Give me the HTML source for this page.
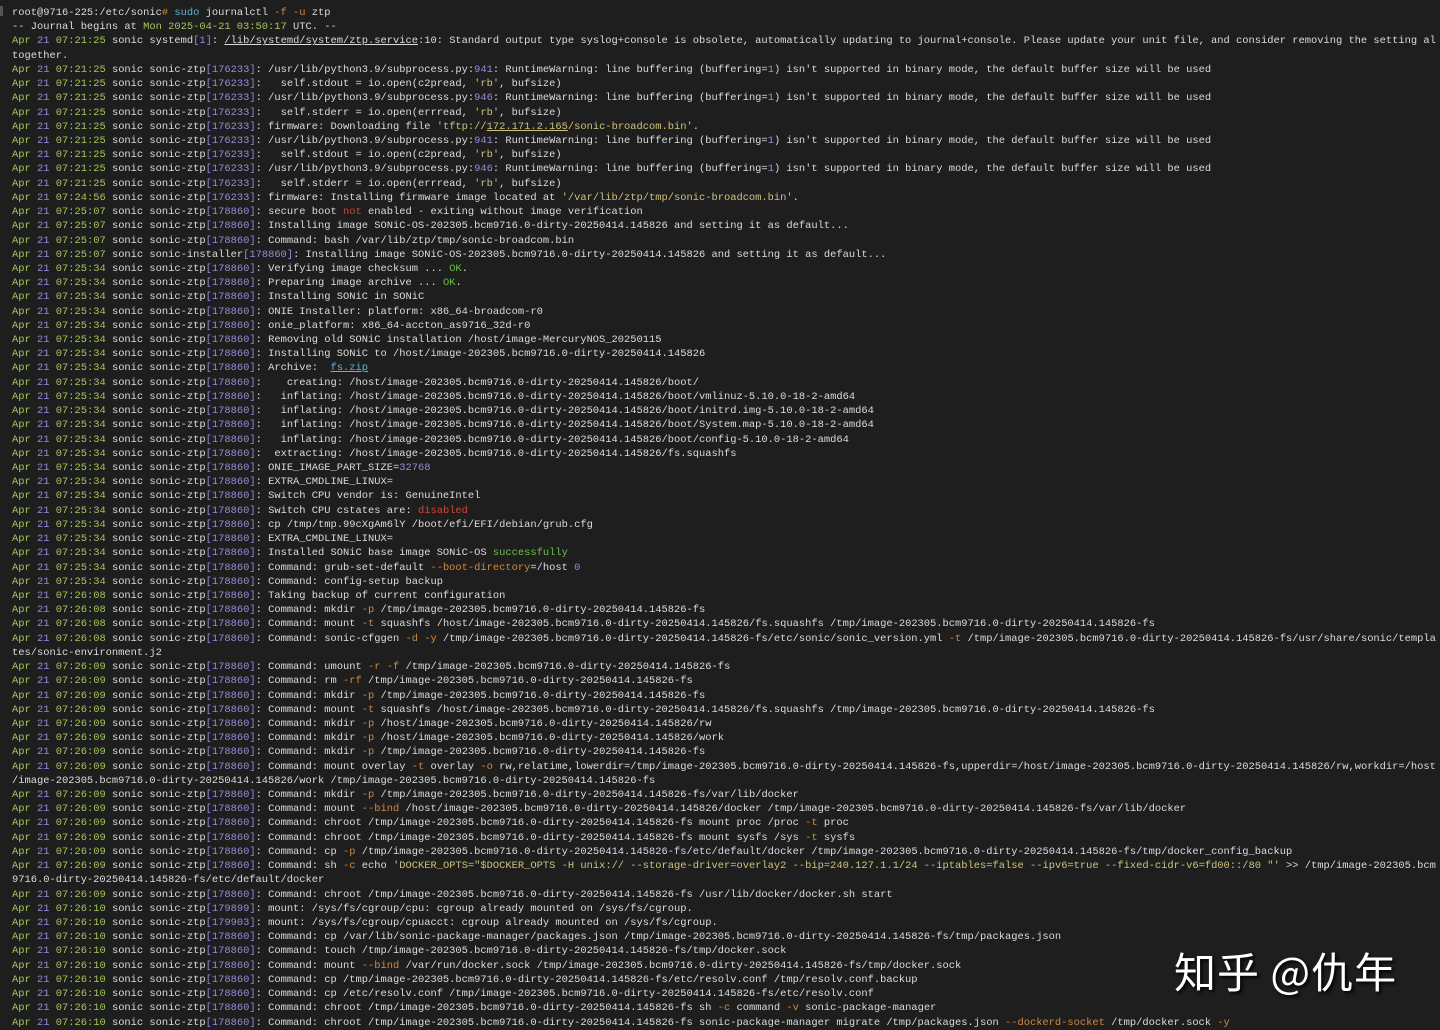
<!DOCTYPE html>
<html><head><meta charset="utf-8"><style>
html,body{margin:0;padding:0;background:#1e1e1e;width:1440px;height:1030px;overflow:hidden}
pre{margin:0;position:absolute;left:12px;top:6px;font-family:"Liberation Mono","DejaVu Sans Mono",monospace;font-size:10.42px;line-height:14.22px;color:#dcdcdc;white-space:pre}
.d{color:#a3c75b}.n{color:#9b88d8}.p{color:#9b88d8}.y{color:#cfc27e}.o{color:#d08a3e}.r{color:#d0453c}.g{color:#6cc04a}.c{color:#5fb3d6}.u{text-decoration:underline}
.wm{position:absolute;left:1174px;top:940px;font-family:"Noto Sans CJK SC","WenQuanYi Zen Hei",sans-serif;font-size:42px;color:#fff;text-shadow:2px 2px 3px #000;letter-spacing:1px}
.bar{position:absolute;left:0;top:6px;width:3px;height:10px;background:#555}
</style></head><body><div class="bar"></div><pre>root@9716-225:/etc/sonic<span class="o">#</span> <span class="c">sudo</span> journalctl <span class="o">-f -u</span> ztp
-- Journal begins at <span class="d">Mon 2025-04-21 03:50:17</span> UTC. --
<span class="d">Apr</span> <span class="n">21</span> <span class="d">07:21:25</span> sonic systemd<span class="p">[1]</span>: <span class="u">/lib/systemd/system/ztp.service</span>:10: Standard output type syslog+console is obsolete, automatically updating to journal+console. Please update your unit file, and consider removing the setting al
together.
<span class="d">Apr</span> <span class="n">21</span> <span class="d">07:21:25</span> sonic sonic-ztp<span class="p">[176233]</span>: /usr/lib/python3.9/subprocess.py:<span class="p">941</span>: RuntimeWarning: line buffering (buffering=<span class="p">1</span>) isn't supported in binary mode, the default buffer size will be used
<span class="d">Apr</span> <span class="n">21</span> <span class="d">07:21:25</span> sonic sonic-ztp<span class="p">[176233]</span>:   self.stdout = io.open(c2pread, <span class="y">'rb'</span>, bufsize)
<span class="d">Apr</span> <span class="n">21</span> <span class="d">07:21:25</span> sonic sonic-ztp<span class="p">[176233]</span>: /usr/lib/python3.9/subprocess.py:<span class="p">946</span>: RuntimeWarning: line buffering (buffering=<span class="p">1</span>) isn't supported in binary mode, the default buffer size will be used
<span class="d">Apr</span> <span class="n">21</span> <span class="d">07:21:25</span> sonic sonic-ztp<span class="p">[176233]</span>:   self.stderr = io.open(errread, <span class="y">'rb'</span>, bufsize)
<span class="d">Apr</span> <span class="n">21</span> <span class="d">07:21:25</span> sonic sonic-ztp<span class="p">[176233]</span>: firmware: Downloading file <span class="y">'tftp://<span class="u">172.171.2.165</span>/sonic-broadcom.bin'</span>.
<span class="d">Apr</span> <span class="n">21</span> <span class="d">07:21:25</span> sonic sonic-ztp<span class="p">[176233]</span>: /usr/lib/python3.9/subprocess.py:<span class="p">941</span>: RuntimeWarning: line buffering (buffering=<span class="p">1</span>) isn't supported in binary mode, the default buffer size will be used
<span class="d">Apr</span> <span class="n">21</span> <span class="d">07:21:25</span> sonic sonic-ztp<span class="p">[176233]</span>:   self.stdout = io.open(c2pread, <span class="y">'rb'</span>, bufsize)
<span class="d">Apr</span> <span class="n">21</span> <span class="d">07:21:25</span> sonic sonic-ztp<span class="p">[176233]</span>: /usr/lib/python3.9/subprocess.py:<span class="p">946</span>: RuntimeWarning: line buffering (buffering=<span class="p">1</span>) isn't supported in binary mode, the default buffer size will be used
<span class="d">Apr</span> <span class="n">21</span> <span class="d">07:21:25</span> sonic sonic-ztp<span class="p">[176233]</span>:   self.stderr = io.open(errread, <span class="y">'rb'</span>, bufsize)
<span class="d">Apr</span> <span class="n">21</span> <span class="d">07:24:56</span> sonic sonic-ztp<span class="p">[176233]</span>: firmware: Installing firmware image located at <span class="y">'/var/lib/ztp/tmp/sonic-broadcom.bin'</span>.
<span class="d">Apr</span> <span class="n">21</span> <span class="d">07:25:07</span> sonic sonic-ztp<span class="p">[178860]</span>: secure boot <span class="r">not</span> enabled - exiting without image verification
<span class="d">Apr</span> <span class="n">21</span> <span class="d">07:25:07</span> sonic sonic-ztp<span class="p">[178860]</span>: Installing image SONiC-OS-202305.bcm9716.0-dirty-20250414.145826 and setting it as default...
<span class="d">Apr</span> <span class="n">21</span> <span class="d">07:25:07</span> sonic sonic-ztp<span class="p">[178860]</span>: Command: bash /var/lib/ztp/tmp/sonic-broadcom.bin
<span class="d">Apr</span> <span class="n">21</span> <span class="d">07:25:07</span> sonic sonic-installer<span class="p">[178860]</span>: Installing image SONiC-OS-202305.bcm9716.0-dirty-20250414.145826 and setting it as default...
<span class="d">Apr</span> <span class="n">21</span> <span class="d">07:25:34</span> sonic sonic-ztp<span class="p">[178860]</span>: Verifying image checksum ... <span class="g">OK</span>.
<span class="d">Apr</span> <span class="n">21</span> <span class="d">07:25:34</span> sonic sonic-ztp<span class="p">[178860]</span>: Preparing image archive ... <span class="g">OK</span>.
<span class="d">Apr</span> <span class="n">21</span> <span class="d">07:25:34</span> sonic sonic-ztp<span class="p">[178860]</span>: Installing SONiC in SONiC
<span class="d">Apr</span> <span class="n">21</span> <span class="d">07:25:34</span> sonic sonic-ztp<span class="p">[178860]</span>: ONIE Installer: platform: x86_64-broadcom-r0
<span class="d">Apr</span> <span class="n">21</span> <span class="d">07:25:34</span> sonic sonic-ztp<span class="p">[178860]</span>: onie_platform: x86_64-accton_as9716_32d-r0
<span class="d">Apr</span> <span class="n">21</span> <span class="d">07:25:34</span> sonic sonic-ztp<span class="p">[178860]</span>: Removing old SONiC installation /host/image-MercuryNOS_20250115
<span class="d">Apr</span> <span class="n">21</span> <span class="d">07:25:34</span> sonic sonic-ztp<span class="p">[178860]</span>: Installing SONiC to /host/image-202305.bcm9716.0-dirty-20250414.145826
<span class="d">Apr</span> <span class="n">21</span> <span class="d">07:25:34</span> sonic sonic-ztp<span class="p">[178860]</span>: Archive:  <span class="c u">fs.zip</span>
<span class="d">Apr</span> <span class="n">21</span> <span class="d">07:25:34</span> sonic sonic-ztp<span class="p">[178860]</span>:    creating: /host/image-202305.bcm9716.0-dirty-20250414.145826/boot/
<span class="d">Apr</span> <span class="n">21</span> <span class="d">07:25:34</span> sonic sonic-ztp<span class="p">[178860]</span>:   inflating: /host/image-202305.bcm9716.0-dirty-20250414.145826/boot/vmlinuz-5.10.0-18-2-amd64
<span class="d">Apr</span> <span class="n">21</span> <span class="d">07:25:34</span> sonic sonic-ztp<span class="p">[178860]</span>:   inflating: /host/image-202305.bcm9716.0-dirty-20250414.145826/boot/initrd.img-5.10.0-18-2-amd64
<span class="d">Apr</span> <span class="n">21</span> <span class="d">07:25:34</span> sonic sonic-ztp<span class="p">[178860]</span>:   inflating: /host/image-202305.bcm9716.0-dirty-20250414.145826/boot/System.map-5.10.0-18-2-amd64
<span class="d">Apr</span> <span class="n">21</span> <span class="d">07:25:34</span> sonic sonic-ztp<span class="p">[178860]</span>:   inflating: /host/image-202305.bcm9716.0-dirty-20250414.145826/boot/config-5.10.0-18-2-amd64
<span class="d">Apr</span> <span class="n">21</span> <span class="d">07:25:34</span> sonic sonic-ztp<span class="p">[178860]</span>:  extracting: /host/image-202305.bcm9716.0-dirty-20250414.145826/fs.squashfs
<span class="d">Apr</span> <span class="n">21</span> <span class="d">07:25:34</span> sonic sonic-ztp<span class="p">[178860]</span>: ONIE_IMAGE_PART_SIZE=<span class="p">32768</span>
<span class="d">Apr</span> <span class="n">21</span> <span class="d">07:25:34</span> sonic sonic-ztp<span class="p">[178860]</span>: EXTRA_CMDLINE_LINUX=
<span class="d">Apr</span> <span class="n">21</span> <span class="d">07:25:34</span> sonic sonic-ztp<span class="p">[178860]</span>: Switch CPU vendor is: GenuineIntel
<span class="d">Apr</span> <span class="n">21</span> <span class="d">07:25:34</span> sonic sonic-ztp<span class="p">[178860]</span>: Switch CPU cstates are: <span class="r">disabled</span>
<span class="d">Apr</span> <span class="n">21</span> <span class="d">07:25:34</span> sonic sonic-ztp<span class="p">[178860]</span>: cp /tmp/tmp.99cXgAm6lY /boot/efi/EFI/debian/grub.cfg
<span class="d">Apr</span> <span class="n">21</span> <span class="d">07:25:34</span> sonic sonic-ztp<span class="p">[178860]</span>: EXTRA_CMDLINE_LINUX=
<span class="d">Apr</span> <span class="n">21</span> <span class="d">07:25:34</span> sonic sonic-ztp<span class="p">[178860]</span>: Installed SONiC base image SONiC-OS <span class="g">successfully</span>
<span class="d">Apr</span> <span class="n">21</span> <span class="d">07:25:34</span> sonic sonic-ztp<span class="p">[178860]</span>: Command: grub-set-default <span class="o">--boot-directory</span>=/host <span class="p">0</span>
<span class="d">Apr</span> <span class="n">21</span> <span class="d">07:25:34</span> sonic sonic-ztp<span class="p">[178860]</span>: Command: config-setup backup
<span class="d">Apr</span> <span class="n">21</span> <span class="d">07:26:08</span> sonic sonic-ztp<span class="p">[178860]</span>: Taking backup of current configuration
<span class="d">Apr</span> <span class="n">21</span> <span class="d">07:26:08</span> sonic sonic-ztp<span class="p">[178860]</span>: Command: mkdir <span class="o">-p</span> /tmp/image-202305.bcm9716.0-dirty-20250414.145826-fs
<span class="d">Apr</span> <span class="n">21</span> <span class="d">07:26:08</span> sonic sonic-ztp<span class="p">[178860]</span>: Command: mount <span class="o">-t</span> squashfs /host/image-202305.bcm9716.0-dirty-20250414.145826/fs.squashfs /tmp/image-202305.bcm9716.0-dirty-20250414.145826-fs
<span class="d">Apr</span> <span class="n">21</span> <span class="d">07:26:08</span> sonic sonic-ztp<span class="p">[178860]</span>: Command: sonic-cfggen <span class="o">-d -y</span> /tmp/image-202305.bcm9716.0-dirty-20250414.145826-fs/etc/sonic/sonic_version.yml <span class="o">-t</span> /tmp/image-202305.bcm9716.0-dirty-20250414.145826-fs/usr/share/sonic/templa
tes/sonic-environment.j2
<span class="d">Apr</span> <span class="n">21</span> <span class="d">07:26:09</span> sonic sonic-ztp<span class="p">[178860]</span>: Command: umount <span class="o">-r -f</span> /tmp/image-202305.bcm9716.0-dirty-20250414.145826-fs
<span class="d">Apr</span> <span class="n">21</span> <span class="d">07:26:09</span> sonic sonic-ztp<span class="p">[178860]</span>: Command: rm <span class="o">-rf</span> /tmp/image-202305.bcm9716.0-dirty-20250414.145826-fs
<span class="d">Apr</span> <span class="n">21</span> <span class="d">07:26:09</span> sonic sonic-ztp<span class="p">[178860]</span>: Command: mkdir <span class="o">-p</span> /tmp/image-202305.bcm9716.0-dirty-20250414.145826-fs
<span class="d">Apr</span> <span class="n">21</span> <span class="d">07:26:09</span> sonic sonic-ztp<span class="p">[178860]</span>: Command: mount <span class="o">-t</span> squashfs /host/image-202305.bcm9716.0-dirty-20250414.145826/fs.squashfs /tmp/image-202305.bcm9716.0-dirty-20250414.145826-fs
<span class="d">Apr</span> <span class="n">21</span> <span class="d">07:26:09</span> sonic sonic-ztp<span class="p">[178860]</span>: Command: mkdir <span class="o">-p</span> /host/image-202305.bcm9716.0-dirty-20250414.145826/rw
<span class="d">Apr</span> <span class="n">21</span> <span class="d">07:26:09</span> sonic sonic-ztp<span class="p">[178860]</span>: Command: mkdir <span class="o">-p</span> /host/image-202305.bcm9716.0-dirty-20250414.145826/work
<span class="d">Apr</span> <span class="n">21</span> <span class="d">07:26:09</span> sonic sonic-ztp<span class="p">[178860]</span>: Command: mkdir <span class="o">-p</span> /tmp/image-202305.bcm9716.0-dirty-20250414.145826-fs
<span class="d">Apr</span> <span class="n">21</span> <span class="d">07:26:09</span> sonic sonic-ztp<span class="p">[178860]</span>: Command: mount overlay <span class="o">-t</span> overlay <span class="o">-o</span> rw,relatime,lowerdir=/tmp/image-202305.bcm9716.0-dirty-20250414.145826-fs,upperdir=/host/image-202305.bcm9716.0-dirty-20250414.145826/rw,workdir=/host
/image-202305.bcm9716.0-dirty-20250414.145826/work /tmp/image-202305.bcm9716.0-dirty-20250414.145826-fs
<span class="d">Apr</span> <span class="n">21</span> <span class="d">07:26:09</span> sonic sonic-ztp<span class="p">[178860]</span>: Command: mkdir <span class="o">-p</span> /tmp/image-202305.bcm9716.0-dirty-20250414.145826-fs/var/lib/docker
<span class="d">Apr</span> <span class="n">21</span> <span class="d">07:26:09</span> sonic sonic-ztp<span class="p">[178860]</span>: Command: mount <span class="o">--bind</span> /host/image-202305.bcm9716.0-dirty-20250414.145826/docker /tmp/image-202305.bcm9716.0-dirty-20250414.145826-fs/var/lib/docker
<span class="d">Apr</span> <span class="n">21</span> <span class="d">07:26:09</span> sonic sonic-ztp<span class="p">[178860]</span>: Command: chroot /tmp/image-202305.bcm9716.0-dirty-20250414.145826-fs mount proc /proc <span class="o">-t</span> proc
<span class="d">Apr</span> <span class="n">21</span> <span class="d">07:26:09</span> sonic sonic-ztp<span class="p">[178860]</span>: Command: chroot /tmp/image-202305.bcm9716.0-dirty-20250414.145826-fs mount sysfs /sys <span class="o">-t</span> sysfs
<span class="d">Apr</span> <span class="n">21</span> <span class="d">07:26:09</span> sonic sonic-ztp<span class="p">[178860]</span>: Command: cp <span class="o">-p</span> /tmp/image-202305.bcm9716.0-dirty-20250414.145826-fs/etc/default/docker /tmp/image-202305.bcm9716.0-dirty-20250414.145826-fs/tmp/docker_config_backup
<span class="d">Apr</span> <span class="n">21</span> <span class="d">07:26:09</span> sonic sonic-ztp<span class="p">[178860]</span>: Command: sh <span class="o">-c</span> echo <span class="y">'DOCKER_OPTS="$DOCKER_OPTS -H unix:// --storage-driver=overlay2 --bip=240.127.1.1/24 --iptables=false --ipv6=true --fixed-cidr-v6=fd00::/80 "'</span> &gt;&gt; /tmp/image-202305.bcm
9716.0-dirty-20250414.145826-fs/etc/default/docker
<span class="d">Apr</span> <span class="n">21</span> <span class="d">07:26:09</span> sonic sonic-ztp<span class="p">[178860]</span>: Command: chroot /tmp/image-202305.bcm9716.0-dirty-20250414.145826-fs /usr/lib/docker/docker.sh start
<span class="d">Apr</span> <span class="n">21</span> <span class="d">07:26:10</span> sonic sonic-ztp<span class="p">[179899]</span>: mount: /sys/fs/cgroup/cpu: cgroup already mounted on /sys/fs/cgroup.
<span class="d">Apr</span> <span class="n">21</span> <span class="d">07:26:10</span> sonic sonic-ztp<span class="p">[179903]</span>: mount: /sys/fs/cgroup/cpuacct: cgroup already mounted on /sys/fs/cgroup.
<span class="d">Apr</span> <span class="n">21</span> <span class="d">07:26:10</span> sonic sonic-ztp<span class="p">[178860]</span>: Command: cp /var/lib/sonic-package-manager/packages.json /tmp/image-202305.bcm9716.0-dirty-20250414.145826-fs/tmp/packages.json
<span class="d">Apr</span> <span class="n">21</span> <span class="d">07:26:10</span> sonic sonic-ztp<span class="p">[178860]</span>: Command: touch /tmp/image-202305.bcm9716.0-dirty-20250414.145826-fs/tmp/docker.sock
<span class="d">Apr</span> <span class="n">21</span> <span class="d">07:26:10</span> sonic sonic-ztp<span class="p">[178860]</span>: Command: mount <span class="o">--bind</span> /var/run/docker.sock /tmp/image-202305.bcm9716.0-dirty-20250414.145826-fs/tmp/docker.sock
<span class="d">Apr</span> <span class="n">21</span> <span class="d">07:26:10</span> sonic sonic-ztp<span class="p">[178860]</span>: Command: cp /tmp/image-202305.bcm9716.0-dirty-20250414.145826-fs/etc/resolv.conf /tmp/resolv.conf.backup
<span class="d">Apr</span> <span class="n">21</span> <span class="d">07:26:10</span> sonic sonic-ztp<span class="p">[178860]</span>: Command: cp /etc/resolv.conf /tmp/image-202305.bcm9716.0-dirty-20250414.145826-fs/etc/resolv.conf
<span class="d">Apr</span> <span class="n">21</span> <span class="d">07:26:10</span> sonic sonic-ztp<span class="p">[178860]</span>: Command: chroot /tmp/image-202305.bcm9716.0-dirty-20250414.145826-fs sh <span class="o">-c</span> command <span class="o">-v</span> sonic-package-manager
<span class="d">Apr</span> <span class="n">21</span> <span class="d">07:26:10</span> sonic sonic-ztp<span class="p">[178860]</span>: Command: chroot /tmp/image-202305.bcm9716.0-dirty-20250414.145826-fs sonic-package-manager migrate /tmp/packages.json <span class="o">--dockerd-socket</span> /tmp/docker.sock <span class="o">-y</span></pre>
<div class="wm">知乎 @仇年</div>
</body></html>
